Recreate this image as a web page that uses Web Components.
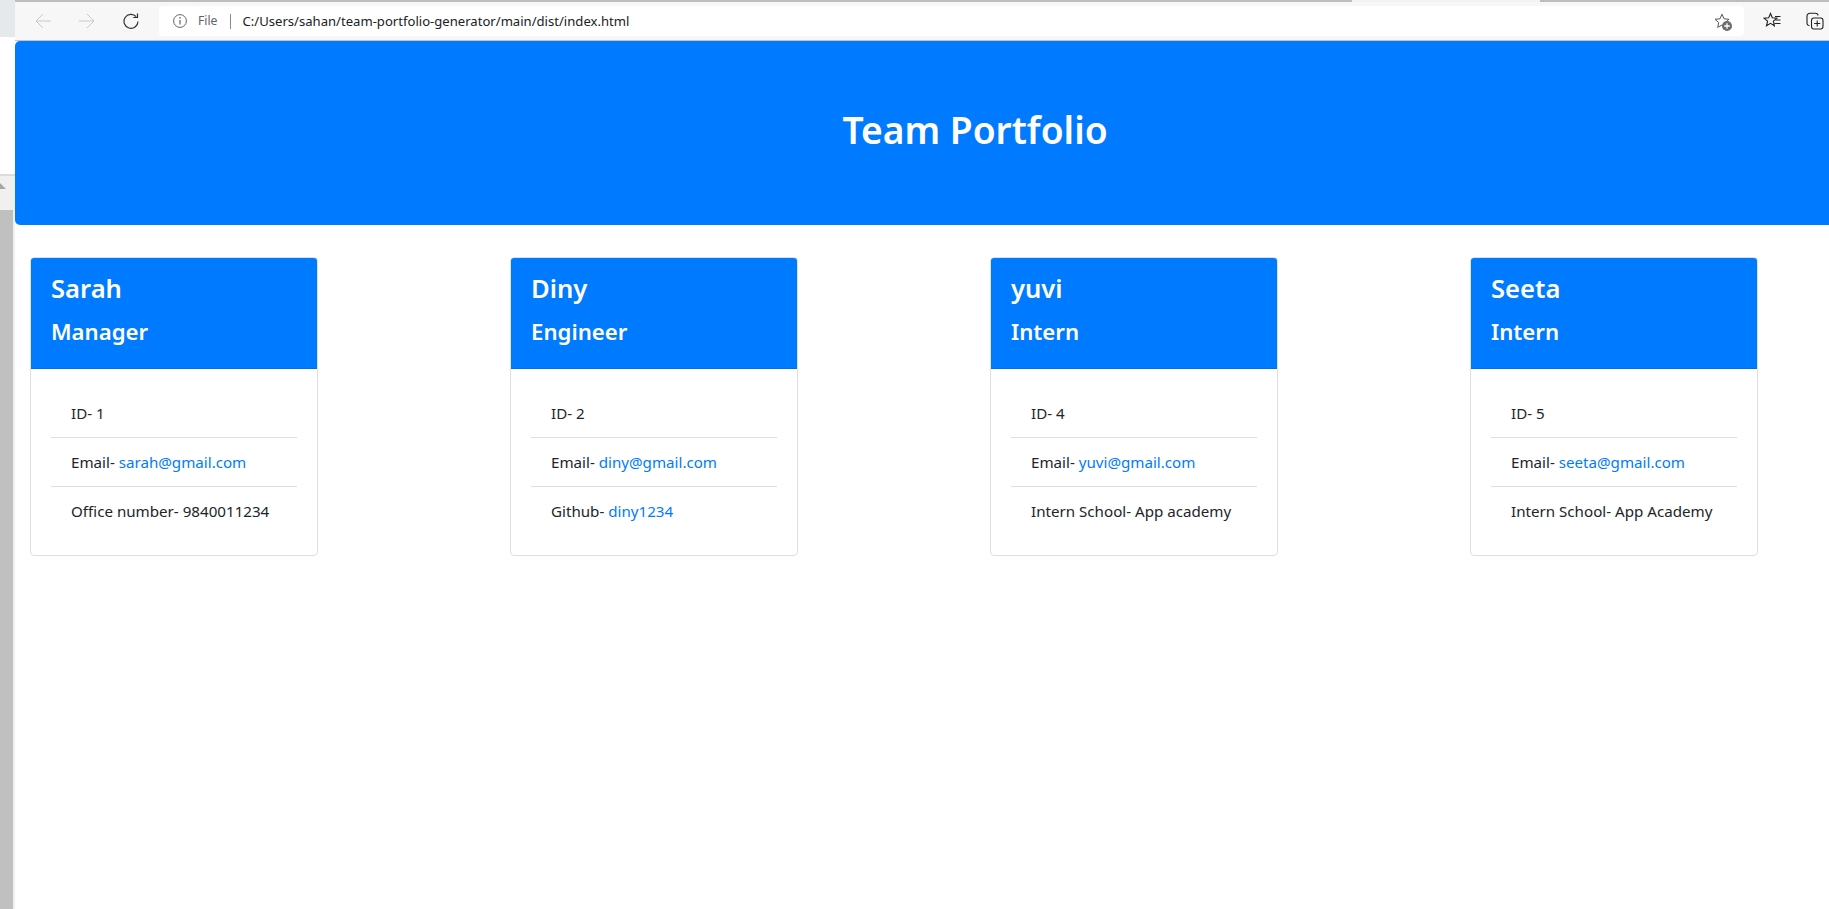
<!doctype html>
<html lang="en"><head><meta charset="utf-8"><title>Team Portfolio</title>
<style>
html,body{margin:0;padding:0;height:100%;overflow:hidden;background:#fff}
body{font-family:"Noto Sans","Open Sans",sans-serif;color:#212529}
</style></head>
<body>
<app-shell>
  <side-gutter slot="gutter"></side-gutter>
  <tab-strip slot="tabs"></tab-strip>
  <browser-toolbar slot="toolbar" url="C:/Users/sahan/team-portfolio-generator/main/dist/index.html"></browser-toolbar>
  <team-page slot="page">
    <hero-banner slot="hero">Team Portfolio</hero-banner>
    <member-card name="Sarah" role="Manager">
      <info-row>ID- 1</info-row>
      <info-row>Email- <a href="#">sarah@gmail.com</a></info-row>
      <info-row>Office number- 9840011234</info-row>
    </member-card>
    <member-card name="Diny" role="Engineer">
      <info-row>ID- 2</info-row>
      <info-row>Email- <a href="#">diny@gmail.com</a></info-row>
      <info-row>Github- <a href="#">diny1234</a></info-row>
    </member-card>
    <member-card name="yuvi" role="Intern">
      <info-row>ID- 4</info-row>
      <info-row>Email- <a href="#">yuvi@gmail.com</a></info-row>
      <info-row>Intern School- App academy</info-row>
    </member-card>
    <member-card name="Seeta" role="Intern">
      <info-row>ID- 5</info-row>
      <info-row>Email- <a href="#">seeta@gmail.com</a></info-row>
      <info-row>Intern School- App Academy</info-row>
    </member-card>
  </team-page>
</app-shell>
<script>
function def(name, html, init){
  customElements.define(name, class extends HTMLElement{
    constructor(){super();this.attachShadow({mode:'open'}).innerHTML=html;}
    connectedCallback(){ if(init) init(this,this.shadowRoot); }
  });
}
def('app-shell',`<style>
:host{display:grid;grid-template-columns:15px 1fr;grid-template-rows:auto auto 1fr;width:1829px;height:909px;overflow:hidden}
.g{grid-row:1 / 4;display:flex}
.p{overflow:hidden;min-width:0}
</style>
<div class="g"><slot name="gutter"></slot></div>
<div><slot name="tabs"></slot></div>
<div><slot name="toolbar"></slot></div>
<div class="p"><slot name="page"></slot></div>`);

def('side-gutter',`<style>
:host{display:flex;flex-direction:column;width:15px;height:909px}
.a{height:37px;background:#e6e9ec}
.b{height:137px;background:#fff}
.c{height:36px;background:#f0f0f0;border-top:2px solid #dcdcdc;box-sizing:border-box;padding-top:7px}
.t{width:0;height:0;border-left:6px solid #a6a6a6;border-top:6px solid transparent}
.d{flex:1;display:flex;background:#f0f0f0}
.th{width:13px;background:#c0c0c0}
</style>
<div class="a"></div><div class="b"></div><div class="c"><div class="t"></div></div><div class="d"><div class="th"></div></div>`);

def('tab-strip',`<style>
:host{display:flex;height:2px;width:100%;background:#f3f3f3}
.x{background:#bdbdbd}
.s1{width:1337px}.s2{width:188px}.s3{flex:1}
.s2{background:#f3f3f3}
</style><div class="x s1"></div><div class="s2"></div><div class="x s3"></div>`);

def('browser-toolbar',`<style>
:host{display:flex;align-items:center;height:39px;box-sizing:border-box;background:#f7f7f7;border-bottom:1px solid #c6c6c6;padding:0 0 0 20px}
svg{display:block;flex:none;fill:none}
.nav{display:flex;align-items:center;gap:28px;margin-right:20px}
.bar{flex:1;display:flex;align-items:center;height:30px;background:#fff;border-radius:4px;padding:0 12px 0 14px;min-width:0}
.file{font-size:12.2px;color:#5f6368;margin-left:11px;line-height:16px}
.sep{width:1px;height:15px;background:#8a8a8a;margin:0 12px 0 12px}
.url{font-size:13.1px;color:#202124;flex:1;white-space:nowrap;line-height:16px}
.acts{display:flex;align-items:center;gap:25px;padding:0 5px 0 19px}
</style>
<div class="nav">
<svg width="16" height="16" viewBox="0 0 16 16" stroke="#c9c9c9"><path d="M16 8H1M8 1 1 8l7 7"/></svg>
<svg width="16" height="16" viewBox="0 0 16 16" stroke="#c9c9c9"><path d="M0 8h15M8 1l7 7-7 7"/></svg>
<svg width="16" height="16" viewBox="0 0 16 16" stroke="#303030" stroke-width="1.2"><path d="M13.2 3.600A7 7 0 1 0 15 8.500"/><path d="M14.500 .5v4h-4.200"/></svg>
</div>
<div class="bar">
<svg width="14" height="14" viewBox="0 0 14 14"><circle cx="7" cy="7" r="6.400" stroke="#666"/><path d="M7 6v4.600" stroke="#666" stroke-width="1.200"/><circle cx="7" cy="3.900" r=".8" fill="#666"/></svg>
<span class="file">File</span><span class="sep"></span><span class="url"></span>
<svg width="18" height="18" viewBox="0 0 18 18" style="margin-top:1px"><path d="M8 1.200l2 4.600 5 .5-3.700 3.300 1 4.800L8 12l-4.300 2.400 1-4.800L1 6.300l5-.5z" stroke="#555" stroke-width="1"/><circle cx="13" cy="13" r="5" fill="#6b6b6b"/><path d="M13 10.200v5.600M10.200 13h5.600" stroke="#fff" stroke-width="1.300"/></svg>
</div>
<div class="acts">
<svg width="18" height="18" viewBox="0 0 18 18" stroke="#222" stroke-width="1.100"><path d="M7.500 1.500l1.800 4.300 4.600.4-3.500 3 1 4.600-3.900-2.400-4 2.400 1.100-4.600-3.500-3 4.600-.4z"/><path d="M12 4.500h5.500M12.500 8h5M11.500 11.500h6"/></svg>
<svg width="18" height="18" viewBox="0 0 18 18" stroke="#222" stroke-width="1.100"><path d="M3.500 13.500A2.500 2.500 0 0 1 1 11V4A2.800 2.800 0 0 1 3.800 1.200H9.500A2.500 2.500 0 0 1 12 3.500"/><rect x="5.500" y="6" width="11.500" height="11" rx="2.400"/><path d="M11.200 8.500v6M8.200 11.500h6"/></svg>
</div>`,(el,r)=>{r.querySelector('.url').textContent=el.getAttribute('url');});

def('team-page',`<style>
:host{display:block;width:1920px}
.cards{display:grid;grid-template-columns:repeat(4,480px);padding:0;margin-top:32px;justify-items:start}
</style>
<slot name="hero"></slot>
<div class="cards"><slot></slot></div>`);

def('hero-banner',`<style>
:host{display:block;background:#007bff;color:#fff;border-radius:5px;padding:65px 32px 0;height:184px;box-sizing:border-box;text-align:center}
h1{margin:0;font-size:37.2px;font-weight:600;line-height:48px}
</style><h1><slot></slot></h1>`);

def('member-card',`<style>
:host{display:block;width:288px;margin-left:15px;box-sizing:border-box;background:#fff;border:1px solid #dfdfdf;border-radius:4px;overflow:hidden}
header{background:#007bff;color:#fff;height:111px;box-sizing:border-box;padding:14px 20px 0;border-bottom:1px solid #0070e8}
h2,h3{margin:0;font-weight:600}
h2{font-size:25.600px;line-height:34px;margin-bottom:11px}
h3{font-size:22.200px;line-height:29px}
.body{padding:20px}
</style>
<header><h2></h2><h3></h3></header>
<div class="body"><slot></slot></div>`,(el,r)=>{
  r.querySelector('h2').textContent=el.getAttribute('name');
  r.querySelector('h3').textContent=el.getAttribute('role');
});

def('info-row',`<style>
:host{display:block;padding:12px 20px;font-size:15.150px;line-height:24px;border-bottom:1px solid #dfdfdf;color:#212529}
:host(:last-child){border-bottom:0}
::slotted(a){color:#007bff;text-decoration:none}
</style><slot></slot>`);
</script>
</body></html>
